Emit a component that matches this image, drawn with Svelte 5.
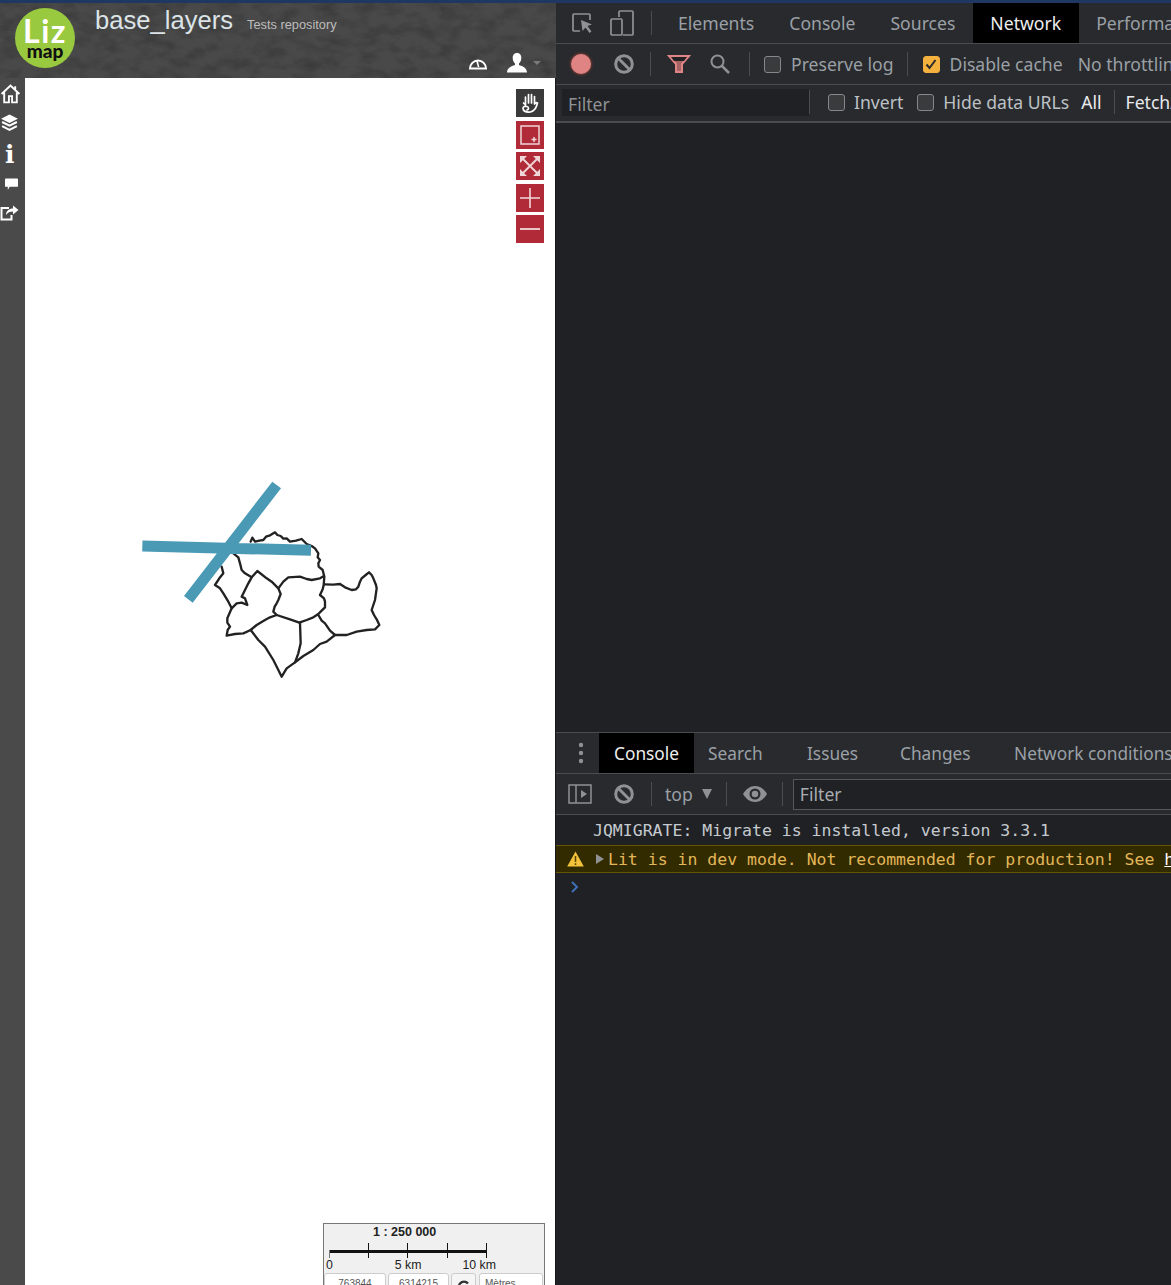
<script>
  const mainTabs = [
    { label: 'Elements' }, { label: 'Console' }, { label: 'Sources' },
    { label: 'Network', active: true }, { label: 'Performance' }
  ];
  const drawerTabs = [
    { label: 'Console', active: true, w: 95 }, { label: 'Search', w: 99 }, { label: 'Issues', w: 93 },
    { label: 'Changes', w: 114 }, { label: 'Network conditions', w: 200 }
  ];
  const mapLines = [
    'M362 215 367 203 375 215 388 212 400 210 408 200 418 197 435 187 442 195 452 198 460 206 470 205 480 215 498 212 515 207 530 222 545 228 555 235 565 250 563 262 570 270 565 280 566 290 578 300 583 320 581 345 578 358 570 375 582 385 585 395 585 412 572 425 565 432 550 442 530 450 508 458 480 448 440 435 430 425 434 410 440 400 445 390 452 372 445 355 425 335 410 325 382 303 365 322 345 310 335 300 330 280 325 262 310 250',
    'M583 343 610 344 630 342 645 352 665 360 678 358 685 350 690 335 695 325 707 315 717 307 725 315 730 325 738 345 740 355 735 390 725 420 732 435 740 448 748 465 735 478 710 480 680 485 650 495 615 495 590 515 570 522 550 540 520 558 495 577 470 595 455 620 445 600 430 570 405 530 385 510 362 480 340 490 315 492 290 497 293 480 300 470 292 458 292 445 305 415 295 395 280 370 270 355 255 345 268 325 280 310 275 290',
    'M365 322 355 340 345 360 335 380 345 385 352 405 335 398 320 400 305 415',
    'M445 355 460 335 475 322 510 320 530 327 545 330 570 325 582 318',
    'M440 435 420 442 405 450 380 465 362 480',
    'M510 458 512 520 505 550 495 577',
    'M565 435 575 452 585 460 600 482 615 495'
  ];
</script>

<div class="screen">
  <div class="topstrip"></div>
  <div class="split">
    <section class="page">
      <header class="head">
        <svg class="grain" width="556" height="75" aria-hidden="true">
          <filter id="n"><feTurbulence type="fractalNoise" baseFrequency="0.05 0.09" numOctaves="5" seed="7"/><feColorMatrix values="0 0 0 0 0  0 0 0 0 0  0 0 0 0 0  2 0 0 0 -0.8"/></filter>
          <rect width="556" height="75" filter="url(#n)" opacity="0.2"/>
        </svg>
        <div class="logo"><span class="liz">Liz</span><span class="lmap">map</span></div>
        <div class="titles">
          <span class="title">base_layers</span>
          <span class="sub">Tests repository</span>
        </div>
        <div class="headicons">
          <svg class="gauge" width="20" height="14" viewBox="0 0 20 14"><path d="M2 12.500a8 8 0 0 1 16 0z" fill="none" stroke="#fff" stroke-width="2"/><path d="M9 5l1.600 6" stroke="#fff" stroke-width="1.600"/></svg>
          <svg class="user" width="22" height="22" viewBox="0 0 22 22"><path d="M11 1c3 0 4.300 2.300 4.300 5 0 2.600-1 4.500-2.300 5.500v1.500c2 1 8 2 8 7.500H1c0-5.500 6-6.500 8-7.500v-1.500C7.700 10.500 6.700 8.600 6.700 6 6.700 3.300 8 1 11 1z" fill="#fff"/></svg>
          <span class="caret"></span>
        </div>
      </header>
      <div class="body">
        <nav class="side">
          <svg width="21" height="20" viewBox="0 0 20 19"><path d="M1.500 9.500 10 1.500l8.500 8M4 8v9.500h4.500v-6h3v6H16V8M14.500 2v3" fill="none" stroke="#fff" stroke-width="1.800"/></svg>
          <svg class="s2" width="19" height="20" viewBox="0 0 18 18"><path d="M9 1l8 4-8 4-8-4z" fill="#fff"/><path d="M2 8l7 3.500L16 8M2 12l7 3.500 7-3.500" fill="none" stroke="#fff" stroke-width="2"/></svg>
          <span class="info">i</span>
          <svg class="s4" width="13" height="13" viewBox="0 0 14 13"><path d="M1 0h12a1 1 0 0 1 1 1v7a1 1 0 0 1-1 1H5l-2 3.500V9H1a1 1 0 0 1-1-1V1a1 1 0 0 1 1-1z" fill="#fff"/></svg>
          <svg class="s5" width="19" height="17" viewBox="0 0 19 17"><path d="M9 4H1.500v11.500h10V11" fill="none" stroke="#fff" stroke-width="2"/><path d="M6 11c0-4 3-6.500 7-6.500V1.500L18.500 6 13 10.500V7.500c-3 0-5.500 1-7 3.500z" fill="#fff"/></svg>
        </nav>
        <main class="map">
          <svg class="vectors" width="260" height="220" viewBox="0 0 780 660" aria-hidden="true">
            {#each mapLines as d}
              <path {d} fill="none" stroke="#222" stroke-width="7" stroke-linejoin="round" stroke-linecap="round"/>
            {/each}
            <path d="M37 228 543 241M440 45 175 388" fill="none" stroke="#4a9ab6" stroke-width="33"/>
          </svg>
          <div class="mapbtns">
            <button class="mb dark" aria-label="pan"><svg width="20" height="22" viewBox="0 0 20 22"><path d="M5.500 13V5M8.500 11V2.500M11.500 11V2.500M14.500 12V4.500M5.500 13 3.500 11M14.500 12c1-1 2-2 3-1-1 3-1 7-7 9-4 .5-7-1-7.500-3.500C3 14.500 5 14 7 14.500c2 .5 2 3 0 3.500" fill="none" stroke="#fff" stroke-width="1.700" stroke-linecap="round"/></svg></button>
            <button class="mb" aria-label="zoom box"><svg width="20" height="20" viewBox="0 0 20 20"><rect x="1" y="1" width="18" height="18" fill="none" stroke="#efd6d8" stroke-width="1.500"/><path d="M14 12v5M11.500 14.500h5" stroke="#efd6d8" stroke-width="1.500"/></svg></button>
            <button class="mb" aria-label="full extent"><svg width="20" height="20" viewBox="0 0 20 20"><path d="M3 3l14 14M17 3 3 17" stroke="#efd6d8" stroke-width="1.800"/><path d="M0 0h7L0 7zM20 0h-7l7 7zM0 20h7l-7-7zM20 20h-7l7-7z" fill="#efd6d8"/></svg></button>
            <button class="mb" aria-label="zoom in"><svg width="20" height="20" viewBox="0 0 20 20"><path d="M10 0v20M0 10h20" stroke="#f0d8da" stroke-width="1.600"/></svg></button>
            <button class="mb" aria-label="zoom out"><svg width="20" height="20" viewBox="0 0 20 20"><path d="M0 10h20" stroke="#f0d8da" stroke-width="1.800"/></svg></button>
          </div>
          <div class="scalebox">
            <div class="ratio">1 : 250 000</div>
            <div class="ruler"><i></i><i></i><i></i><i></i></div>
            <div class="labels"><span>0</span><span>5 km</span><span>10 km</span></div>
            <div class="coords">
              <span class="field f1">763844</span>
              <span class="field f2">6314215</span>
              <span class="field f3"><svg width="12" height="12" viewBox="0 0 12 12"><path d="M10 3.500A5 5 0 1 0 11 7" fill="none" stroke="#333" stroke-width="2.200"/></svg></span>
              <span class="field f4">Mètres</span>
            </div>
          </div>
        </main>
      </div>
    </section>

    <section class="devtools">
      <div class="bar tabs">
        <svg class="ic" style="margin-left:15px" width="24" height="24" viewBox="0 0 24 24"><path d="M9 20H3a1 1 0 0 1-1-1V4a1 1 0 0 1 1-1h15a1 1 0 0 1 1 1v5" fill="none" stroke="#8f9194" stroke-width="1.700"/><path d="M10 9l11 4.500-4.500 1.500 4 5.500-2 1.500-4-5.500-3 3.500z" fill="#8f9194"/></svg>
        <svg class="ic" style="margin-left:15px" width="24" height="26" viewBox="0 0 24 26"><path d="M9 7V2a1 1 0 0 1 1-1h12a1 1 0 0 1 1 1v22a1 1 0 0 1-1 1H13" fill="none" stroke="#8f9194" stroke-width="1.700"/><rect x="1" y="9" width="11" height="16" rx="1" fill="none" stroke="#8f9194" stroke-width="1.700"/></svg>
        <span class="vdiv" style="margin-left:17px"></span>
        <div class="tablist" style="margin-left:8.500px">
          {#each mainTabs as t}
            <span class="tab" class:active={t.active}>{t.label}</span>
          {/each}
        </div>
      </div>
      <div class="bar row2">
        <span class="rec"></span>
        <svg class="ic" style="margin-left:22px" width="22" height="22" viewBox="0 0 22 22"><circle cx="11" cy="11" r="8.300" fill="none" stroke="#8f9194" stroke-width="3"/><path d="M5 5l12 12" stroke="#8f9194" stroke-width="3"/></svg>
        <span class="vdiv" style="margin-left:15px"></span>
        <svg class="ic" style="margin-left:16px" width="24" height="22" viewBox="0 0 24 22"><path d="M2 3h20l-7 8v8h-6v-8z" fill="#a86464" stroke="#e08585" stroke-width="2"/><path d="M4 4h16l-3 4H7z" fill="#222"/></svg>
        <svg class="ic" style="margin-left:18px" width="22" height="22" viewBox="0 0 22 22"><circle cx="8.500" cy="8.500" r="6" fill="none" stroke="#8f9194" stroke-width="2"/><path d="M13 13l7 7" stroke="#8f9194" stroke-width="2.500"/></svg>
        <span class="vdiv" style="margin-left:18px"></span>
        <span class="cb" style="margin-left:14px"></span>
        <span class="lbl" style="margin-left:10px">Preserve log</span>
        <span class="vdiv" style="margin-left:13px"></span>
        <span class="cb on" style="margin-left:15px"><svg width="14" height="14" viewBox="0 0 14 14"><path d="M2.500 7.500 5.500 11 11.500 3" fill="none" stroke="#2a2a2a" stroke-width="2"/></svg></span>
        <span class="lbl" style="margin-left:10px">Disable cache</span>
        <span class="lbl" style="margin-left:15px">No throttling</span>
      </div>
      <div class="bar row3">
        <span class="filter1">Filter</span>
        <span class="vdiv"></span>
        <span class="cb" style="margin-left:18px"></span>
        <span class="lbl bright" style="margin-left:9px">Invert</span>
        <span class="cb" style="margin-left:14px"></span>
        <span class="lbl bright" style="margin-left:9px">Hide data URLs</span>
        <span class="lbl white" style="margin-left:12px">All</span>
        <span class="vdiv" style="margin-left:12px"></span>
        <span class="lbl white" style="margin-left:11px">Fetch/XHR</span>
      </div>
      <div class="netpane"></div>
      <div class="bar drawer">
        <svg class="ic" style="margin-left:22px" width="6" height="22" viewBox="0 0 6 22"><circle cx="3" cy="3" r="2.200" fill="#8f9194"/><circle cx="3" cy="11" r="2.200" fill="#8f9194"/><circle cx="3" cy="19" r="2.200" fill="#8f9194"/></svg>
        <div class="tablist" style="margin-left:15px">
          {#each drawerTabs as t}
            <span class="tab dt" class:active={t.active} class:first={t.active} style="width:{t.w}px">{t.label}</span>
          {/each}
        </div>
      </div>
      <div class="bar row5">
        <svg class="ic" style="margin-left:12px" width="24" height="20" viewBox="0 0 24 20"><rect x="1" y="1" width="22" height="18" fill="none" stroke="#8f9194" stroke-width="1.500"/><path d="M8 1v18" stroke="#8f9194" stroke-width="1.500"/><path d="M13 6l6 4-6 4z" fill="#8f9194"/></svg>
        <svg class="ic" style="margin-left:21px" width="22" height="22" viewBox="0 0 22 22"><circle cx="11" cy="11" r="8.300" fill="none" stroke="#8f9194" stroke-width="3"/><path d="M5 5l12 12" stroke="#8f9194" stroke-width="3"/></svg>
        <span class="vdiv" style="margin-left:16px"></span>
        <span class="lbl" style="margin-left:13px">top</span>
        <span class="tri" style="margin-left:9px"></span>
        <span class="vdiv" style="margin-left:14px"></span>
        <svg class="ic" style="margin-left:15px" width="26" height="18" viewBox="0 0 26 18"><path d="M1 9c3-5 7-8 12-8s9 3 12 8c-3 5-7 8-12 8S4 14 1 9z" fill="#8f9194"/><circle cx="13" cy="9" r="5.500" fill="#292a2d"/><circle cx="13" cy="9" r="3.300" fill="#8f9194"/></svg>
        <span class="vdiv" style="margin-left:14px"></span>
        <span class="filter2">Filter</span>
      </div>
      <div class="console">
        <div class="msg">JQMIGRATE: Migrate is installed, version 3.3.1</div>
        <div class="msg warn">
          <svg width="17" height="16" viewBox="0 0 17 16"><path d="M8.500 0.500 16.800 15.500H.2z" fill="#f3c13a"/><path d="M8.500 5v6M8.500 12.200v1.800" stroke="#5a4500" stroke-width="1.500"/></svg>
          <span class="expand"></span>
          <span class="wtext">Lit is in dev mode. Not recommended for production! See <u>https://lit.dev/msg/dev-mode</u></span>
        </div>
        <div class="prompt"><svg width="10" height="12" viewBox="0 0 10 12"><path d="M2 1l5 5-5 5" fill="none" stroke="#3f6fb5" stroke-width="2"/></svg></div>
      </div>
    </section>
  </div>
</div>

<style>
  :global(body) { margin: 0; background: #202124; }
  .screen { width: 1171px; height: 1285px; overflow: hidden; display: flex; flex-direction: column; }
  .topstrip { height: 3px; flex: none; background: #1f3763; }
  .split { flex: 1; display: flex; min-height: 0; }

  .page { width: 555px; flex: none; display: flex; flex-direction: column; background: #fff; }
  .head { height: 75px; flex: none; width: 556px; background: #494949; position: relative; overflow: hidden; font-family: "Liberation Sans", sans-serif; }
  .grain { position: absolute; left: 0; top: 0; }
  .logo { position: absolute; left: 15px; top: 5px; width: 60px; height: 60px; border-radius: 50%; background: #99c93f; display: flex; flex-direction: column; align-items: center; }
  .liz { font: 700 32px/24px "Lato", sans-serif; color: #fff; margin-top: 11px; letter-spacing: 1.500px; }
  .lmap { font: 900 19px/16px "Lato", sans-serif; color: #111; margin-top: 0; }
  .titles { position: absolute; left: 95px; top: 1px; display: flex; align-items: baseline; }
  .title { font-size: 25.600px; line-height: 32px; color: #dce4e8; }
  .sub { font-size: 12.800px; color: #bdbdbd; margin-left: 14px; }
  .headicons { position: absolute; right: 15px; top: 49px; display: flex; align-items: center; }
  .gauge { margin-left: -1px; }
  .user { margin-left: 18px; }
  .caret { width: 0; height: 0; border: 4px solid transparent; border-top-color: #7a7a7a; border-bottom: 0; margin-left: 5px; }

  .body { flex: 1; display: flex; min-height: 0; }
  .side { width: 25px; flex: none; background: #4a4a4a; display: flex; flex-direction: column; align-items: flex-start; padding-top: 6px; box-sizing: border-box; }
  .side svg { display: block; }
  .s2 { margin: 9px 0 0 0; }
  .info { font: 700 25px/25px "DejaVu Serif", serif; color: #fff; margin: 9px 0 0 5px; }
  .s4 { margin: 11px 0 0 5px; }
  .s5 { margin: 13px 0 0 0; }
  .map { flex: 1; position: relative; background: #fff; overflow: hidden; }
  .vectors { position: absolute; left: 105px; top: 392px; }
  .mapbtns { position: absolute; left: 491px; top: 11px; display: flex; flex-direction: column; gap: 3.500px; }
  .mb { width: 28px; height: 28px; padding: 0; border: 0; background: #b02a37; display: flex; align-items: center; justify-content: center; }
  .mb.dark { background: #3a3a3a; }
  .scalebox { position: absolute; left: 298px; top: 1145px; width: 222px; height: 80px; box-sizing: border-box; background: #f0f0f0; border: 1px solid #777; font: 12.300px "Liberation Sans", sans-serif; color: #222; }
  .ratio { font-weight: 700; font-size: 12.500px; line-height: 14px; margin: 1px 0 0 49px; }
  .ruler { position: relative; margin: 11px 0 0 5px; width: 158px; height: 3px; background: #111; display: flex; justify-content: flex-end; }
  .ruler::before { content: ""; position: absolute; left: 0; top: 0; width: 1px; height: 8px; background: #777; }
  .ruler i { position: relative; flex: 0 0 39.500px; }
  .ruler i::after { content: ""; position: absolute; right: 0; top: -7px; width: 1px; height: 15px; background: #111; }
  .labels { position: relative; height: 14px; margin-top: 5px; line-height: 14px; display: flex; padding-left: 2px; }
  .labels span:nth-child(2) { margin-left: 62px; }
  .labels span:nth-child(3) { margin-left: 41px; }
  .coords { display: flex; gap: 2px; margin-top: 1px; font-size: 10px; color: #555; }
  .field { height: 24px; background: #fff; border: 1px solid #ccc; border-radius: 3px; box-sizing: border-box; text-align: center; line-height: 20px; }
  .f1 { width: 62px; } .f2 { width: 61px; } .f3 { width: 25px; background: #f5f5f5; } .f4 { width: 64px; margin-left: 1px; text-align: left; padding-left: 5px; }
  .f3 svg { margin-top: 6px; }

  .devtools { flex: 1; min-width: 0; display: flex; flex-direction: column; background: #202124; border-left: 1px solid #17181a; box-shadow: inset 1px 0 0 #4a4c50; font-family: "Noto Sans", sans-serif; font-size: 17.600px; color: #9aa0a6; overflow: hidden; }
  .bar { display: flex; align-items: center; flex: none; background: #292a2d; white-space: nowrap; border-bottom: 1px solid #4a4c50; box-sizing: border-box; overflow: hidden; }
  .ic { flex: none; display: block; }
  .vdiv { flex: none; width: 1px; height: 24px; background: #4a4c50; }
  .tabs { height: 41px; }
  .tablist { display: flex; align-self: stretch; flex: none; }
  .tab { padding: 0 17.500px; display: flex; align-items: center; flex: none; color: #9aa0a6; }
  .tab.active { background: #000; color: #eee; }
  .dt { padding: 0; font-size: 17.300px; }
  .dt.first { padding-left: 15px; box-sizing: border-box; }
  .dt:not(.first) { padding-left: 14px; box-sizing: border-box; }
  .row2 { height: 41px; padding-left: 15px; }
  .rec { flex: none; width: 20px; height: 20px; border-radius: 50%; background: #e08383; box-shadow: 0 0 2px 1px #6b3a35; }
  .cb { flex: none; width: 15px; height: 15px; border-radius: 3px; border: 1.500px solid #85878a; background: #3a3b3d; display: flex; align-items: center; justify-content: center; }
  .cb.on { background: #f4b13e; border-color: #f4b13e; }
  .lbl { flex: none; }
  .bright { color: #bdc1c6; }
  .white { color: #e8eaed; }
  .row3 { height: 38px; border-bottom: 2px solid #4a4c50; padding: 0 0 2px 6px; }
  .filter1 { flex: none; width: 247px; height: 27px; line-height: 30px; padding-left: 6px; box-sizing: border-box; background: #202124; color: #8f9194; }
  .netpane { flex: none; height: 610px; box-sizing: border-box; background: #202124; border-bottom: 1px solid #4a4c50; }
  .drawer { height: 41px; }
  .drawer .tablist { height: 40px; }
  .row5 { height: 41px; }
  .tri { flex: none; width: 0; height: 0; border: 5.500px solid transparent; border-top: 10px solid #8f9194; border-bottom: 0; }
  .filter2 { flex: none; width: 400px; height: 31px; margin-left: 10px; padding-left: 6px; box-sizing: border-box; line-height: 29px; border: 1px solid #55575a; background: #202124; color: #a8acb0; }
  .console { flex: 1; background: #202124; font-family: "DejaVu Sans Mono", monospace; font-size: 16.500px; }
  .msg { height: 30px; line-height: 32px; padding-left: 37px; color: #c5cad0; white-space: nowrap; box-sizing: border-box; }
  .msg.warn { height: 28px; line-height: 26px; padding-left: 11px; background: #332b00; border: 1px solid #665500; border-width: 1px 0; color: #e3b65a; display: flex; align-items: center; }
  .warn svg { flex: none; }
  .expand { flex: none; width: 0; height: 0; border: 5px solid transparent; border-left: 8px solid #8f9194; border-right: 0; margin-left: 12px; margin-right: 4px; }
  .wtext { flex: none; margin-top: 2px; }
  .wtext u { color: #fff; }
  .prompt { padding: 8px 0 0 14px; }
  .prompt svg { display: block; }
</style>
